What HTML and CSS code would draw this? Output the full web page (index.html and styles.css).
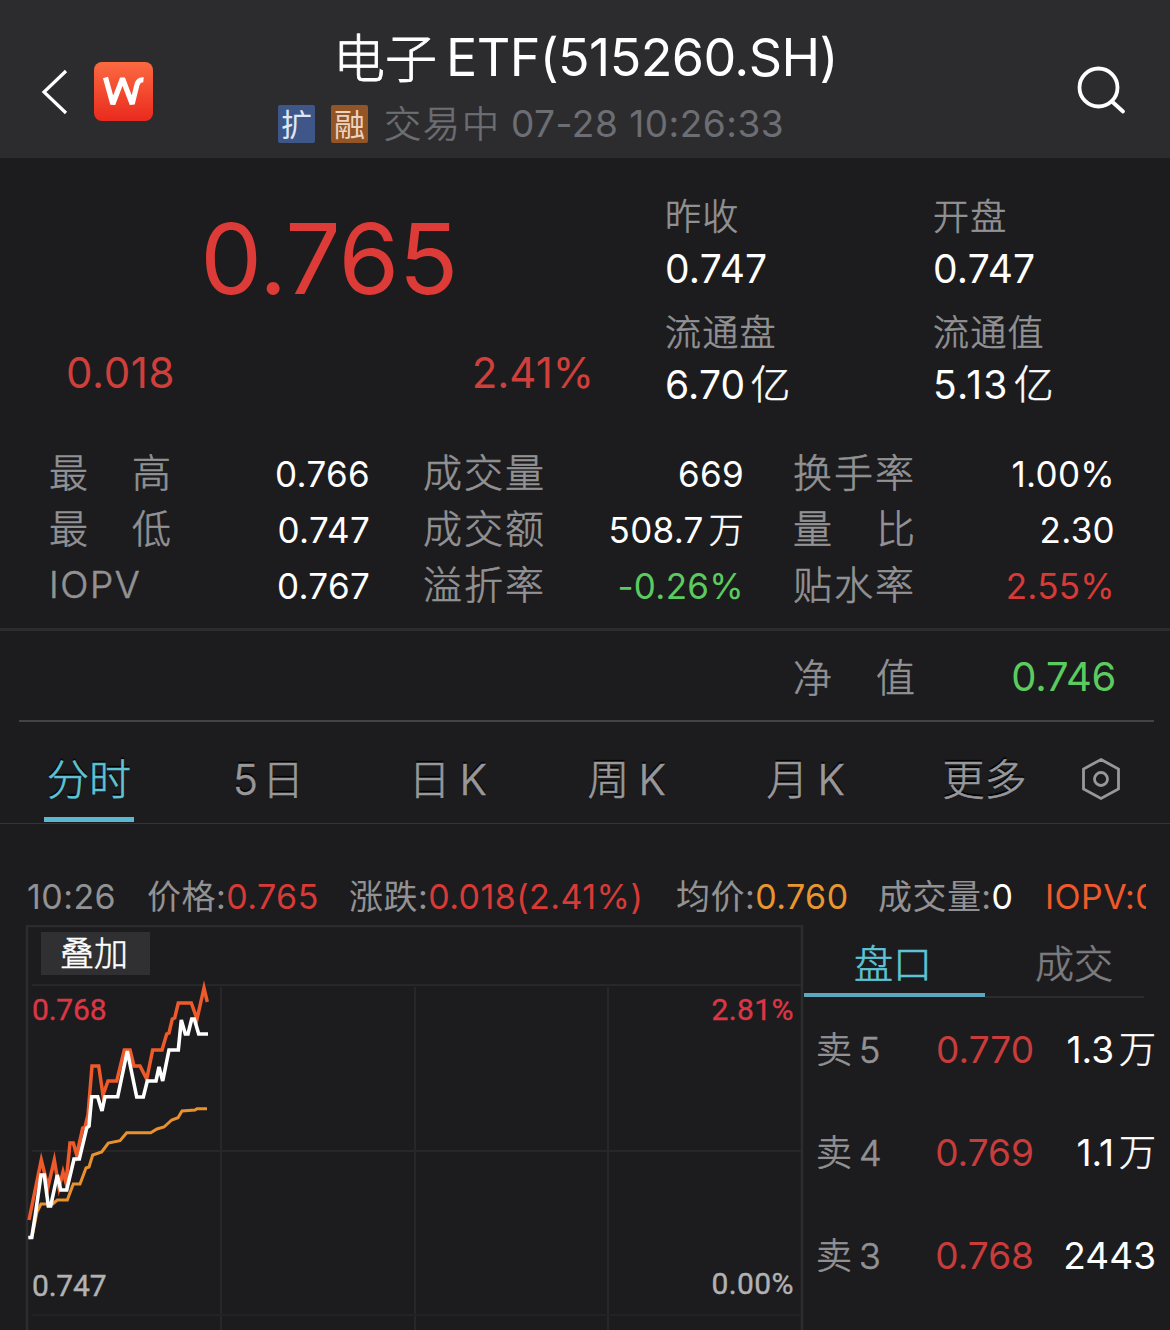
FILE: index.html
```html
<!DOCTYPE html>
<html lang="zh-CN">
<head>
<meta charset="utf-8">
<title>电子ETF(515260.SH)</title>
<link rel="stylesheet" href="styles.css">
</head>
<body>
<header class="topbar">
  <div class="topbar-left">
    <svg class="back" width="30" height="50" viewBox="0 0 30 50"><path d="M26 4 4 25 26 46" fill="none" stroke="#fff" stroke-width="3.2"/></svg>
    <svg class="logo" width="60" height="60" viewBox="0 0 60 60">
      <defs><linearGradient id="lg" x1="0" y1="0" x2="0" y2="1"><stop offset="0" stop-color="#fb6a41"/><stop offset="1" stop-color="#ea2a1e"/></linearGradient></defs>
      <rect x="0" y="0" width="59" height="59" rx="8" fill="url(#lg)"/>
      <path d="M11.500 15.500 18.800 42 28.500 16.500 38.200 42 43 22.500Q44.500 17.300 49.500 17.800" fill="none" stroke="#fff" stroke-width="5.200" stroke-linejoin="bevel"/>
    </svg>
  </div>
  <div class="heading">
    <h1 class="name"><span class="name-cjk">电子</span><span class="name-code">ETF(515260.SH)</span></h1>
    <div class="status">
      <span class="badge badge-blue">扩</span>
      <span class="badge badge-orange">融</span>
      <span class="status-text">交易中</span>
      <span class="status-time">07-28 10:26:33</span>
    </div>
  </div>
  <svg class="search" width="54" height="54" viewBox="0 0 54 54"><g fill="none" stroke="#fff" stroke-width="3.800"><circle cx="25.500" cy="25.500" r="19"/><path d="M39 39.500 50 49.500" stroke-linecap="round"/></g></svg>
</header>

<section class="quote">
  <div class="quote-main">
    <div class="price">0.765</div>
    <div class="changes"><span>0.018</span><span class="change-pct">2.41%</span></div>
  </div>
  <dl class="facts">
    <div class="fact"><dt>昨收</dt><dd>0.747</dd></div>
    <div class="fact"><dt>开盘</dt><dd>0.747</dd></div>
    <div class="fact"><dt>流通盘</dt><dd>6.70<span class="unit">亿</span></dd></div>
    <div class="fact"><dt>流通值</dt><dd class="loose">5.13<span class="unit">亿</span></dd></div>
  </dl>
</section>

<section class="stats">
  <div class="stat"><span class="label spread"><i>最</i><i>高</i></span><span class="value">0.766</span></div>
  <div class="stat"><span class="label">成交量</span><span class="value">669</span></div>
  <div class="stat"><span class="label">换手率</span><span class="value">1.00%</span></div>
  <div class="stat"><span class="label spread"><i>最</i><i>低</i></span><span class="value">0.747</span></div>
  <div class="stat"><span class="label">成交额</span><span class="value">508.7<span class="unit">万</span></span></div>
  <div class="stat"><span class="label spread"><i>量</i><i>比</i></span><span class="value">2.30</span></div>
  <div class="stat"><span class="label latin">IOPV</span><span class="value">0.767</span></div>
  <div class="stat"><span class="label">溢折率</span><span class="value down">-0.26%</span></div>
  <div class="stat"><span class="label">贴水率</span><span class="value up">2.55%</span></div>
</section>

<section class="nav-row">
  <div class="stat nav-stat"><span class="label spread"><i>净</i><i>值</i></span><span class="value down">0.746</span></div>
</section>

<nav class="tabs">
  <a class="tab active">分时</a>
  <a class="tab">5<span class="tab-cjk">日</span></a>
  <a class="tab">日<span class="tab-k">K</span></a>
  <a class="tab">周<span class="tab-k">K</span></a>
  <a class="tab">月<span class="tab-k">K</span></a>
  <a class="tab">更多</a>
  <svg class="settings" width="42" height="44" viewBox="0 0 42 44"><g fill="none" stroke="#98989b" stroke-width="2.800"><path d="M21 2.500 38.500 12V32L21 41.500 3.500 32V12Z"/><circle cx="21" cy="22" r="6.500"/></g></svg>
</nav>

<div class="ticker">
  <span>10:26</span>
  <span>价格:<b class="up">0.765</b></span>
  <span>涨跌:<b class="up">0.018(2.41%)</b></span>
  <span>均价:<b class="avg">0.760</b></span>
  <span>成交量:<b class="plain">0</b></span>
  <span class="iopv">IOPV:0</span>
</div>

<main class="board">
  <div class="chart">
    <svg class="plot" width="804" height="405" viewBox="0 925 804 405">
      <g fill="none" stroke="#2c2c2e" stroke-width="2">
        <path d="M27 1330V926H802V1330" stroke-width="2.500"/>
        <path d="M32 985H801M32 1151H801M221 987V1330M415 987V1330M608 987V1330" stroke="#272729"/>
        <path d="M32 1315H801" stroke="#222224"/>
      </g>
      <g fill="none" stroke-width="3" stroke-linejoin="miter">
        <polyline stroke="#e8912d" points="29,1238 32,1237 37,1212 41,1204 52.700,1204 57.300,1200 67.300,1200 73.300,1184 80,1184 86,1168 89,1167 92.700,1155 101.700,1152 108.300,1143 120,1140.700 126.700,1132.700 150.700,1132.700 157,1129 164,1127 171.700,1120 178,1117.700 182,1111 195,1110 197,1108.700 207,1108.700"/>
        <polyline stroke="#ef5a2b" stroke-width="3.500" stroke-miterlimit="10" points="29,1220 41.300,1160 48,1187 54.300,1160 59,1188 63,1172 66,1183 70,1143 73.300,1143 76.700,1155 82.700,1128 85,1127 88,1115 92,1066 98.700,1066 103,1095 108,1081 116.700,1081 124.300,1050 130,1050 134,1066 140,1066 146.700,1079 152.700,1050 162,1050 166.700,1034 169,1033 172.300,1019 174.700,1018 178.300,1003 191.300,1003 197,1019 204,988 207.300,1002"/>
        <polyline stroke="#fff" stroke-width="3.600" points="28.300,1237.500 31.700,1237.500 35,1217 41,1175 44.300,1175 48.300,1206 50.700,1206 57.300,1175 60.700,1190 66.700,1190 74,1159 79.300,1159 86.700,1128 89,1126 91.700,1096.700 97.700,1096.700 102,1111 105,1096.700 117.700,1096.700 127.300,1051 136.700,1097 143.300,1097 147.300,1081 156,1081 159,1067 162.700,1081 169,1050 178.300,1050 181.300,1020 185.300,1034 188,1034 191.700,1019 194.300,1019 198.700,1034 208,1034"/>
      </g>
      <g class="axis">
        <text x="32" y="1020" class="axis-up">0.768</text>
        <text x="794" y="1020" class="axis-up axis-end">2.81%</text>
        <text x="32" y="1296">0.747</text>
        <text x="794" y="1293.500" class="axis-end">0.00%</text>
      </g>
    </svg>
    <button class="overlay-btn">叠加</button>
  </div>
  <aside class="book">
    <div class="book-tabs"><span class="book-tab active">盘口</span><span class="book-tab">成交</span></div>
    <div class="order"><span class="side">卖<i>5</i></span><span class="bid">0.770</span><span class="vol">1.3<span class="unit">万</span></span></div>
    <div class="order"><span class="side">卖<i>4</i></span><span class="bid">0.769</span><span class="vol">1.1<span class="unit">万</span></span></div>
    <div class="order"><span class="side">卖<i>3</i></span><span class="bid">0.768</span><span class="vol">2443</span></div>
  </aside>
</main>
</body>
</html>
```
FILE: styles.css
```css
* { box-sizing: border-box; margin: 0; padding: 0; }
i { font-style: normal; }
b { font-weight: 400; }
body {
  width: 1170px;
  height: 1330px;
  overflow: hidden;
  background: #1c1c1e;
  color: #fff;
  font-family: Inter, "Noto Sans CJK SC", sans-serif;
  font-weight: 400;
  white-space: nowrap;
}
.up { color: #d83a37; }
.down { color: #5bcb5f; }
.unit { margin-left: 5px; font-weight: 300; -webkit-text-stroke: 0.5px; }
.loose { letter-spacing: 1.400px; }

.topbar {
  display: grid;
  grid-template-columns: 278px 1fr 120px;
  height: 158px;
  background: #2c2c2e;
}
.topbar-left { display: flex; align-items: center; gap: 24px; height: 60px; margin: 62px 0 0 40px; }
.heading { padding-top: 22px; }
.name { display: flex; margin-left: 55px; height: 70px; font-size: 52px; font-weight: 400; line-height: 71px; }
.name-cjk { padding-top: 2px; font-weight: 300; -webkit-text-stroke: 0.8px; }
.name-code { margin-left: 9px; letter-spacing: -0.600px; }
.status { display: flex; align-items: center; height: 64px; color: #6c6e73; font-size: 37px; line-height: 66px; }
.badge { width: 37px; height: 38px; margin-right: 16px; border-radius: 2px; font-size: 31px; line-height: 39px; text-align: center; }
.badge-blue { background: #3e5788; color: #dfe6f5; }
.badge-orange { background: #935526; color: #ecd3bf; }
.status-text { padding-top: 2px; letter-spacing: 2px; font-weight: 300; -webkit-text-stroke: 0.6px; }
.status-time { margin-left: 10px; letter-spacing: 0.500px; }
.search { margin: 62px 0 0 23px; }

.quote { display: grid; grid-template-columns: 666px 1fr; height: 286px; }
.price { height: 204px; padding-right: 8px; color: #dc3b37; font-size: 98px; line-height: 202px; text-align: center; letter-spacing: -0.600px; }
.changes { display: flex; justify-content: space-between; padding: 0 72px 0 66px; color: #cf3f3b; font-size: 42px; line-height: 21px; }
.changes span:first-child { letter-spacing: 0.600px; }
.facts { display: grid; grid-template-columns: 268px 1fr; grid-auto-rows: 116px; padding-top: 31px; margin-left: -1px; }
.fact dt { height: 54px; color: #929294; font-size: 36px; font-weight: 300; line-height: 56px; letter-spacing: 1.300px; -webkit-text-stroke: 0.6px; }
.fact dd { font-size: 39px; line-height: 51px; letter-spacing: 0.200px; }
.fact dd.loose { letter-spacing: 1.300px; }
.fact .unit { font-size: 40px; }

.stats { display: grid; grid-template-columns: 373px 371px 322px; grid-auto-rows: 56px; height: 187px; padding: 3px 0 0 49px; border-bottom: 3px solid #2c2c2e; }
.stat { display: flex; justify-content: space-between; line-height: 55px; }
.stat:nth-child(3n+1) { padding-right: 52px; }
.stat:nth-child(3n+2) { padding: 0 49px 0 1px; }
.label { height: 50px; color: #929294; font-size: 39px; font-weight: 300; line-height: 51px; letter-spacing: 2px; -webkit-text-stroke: 0.6px; }
.label.latin { font-size: 37px; letter-spacing: 1.600px; }
.spread { display: flex; justify-content: space-between; width: 122px; }
.spread i { letter-spacing: 0; }
.value { font-size: 35px; letter-spacing: 0.300px; }

.nav-row { display: flex; justify-content: flex-end; height: 91px; margin: 0 16px 0 19px; padding-right: 38px; border-bottom: 2px solid #434345; }
.stat.nav-stat { width: 323px; padding: 0; line-height: 92px; }
.nav-stat .label { line-height: 94px; }
.nav-stat .value { font-size: 40px; letter-spacing: -0.300px; }

.tabs { display: grid; grid-template-columns: repeat(6, 179px) 54px; height: 102px; border-bottom: 1px solid #343436; }
.tab { display: flex; justify-content: center; align-items: center; justify-self: center; width: 90px; height: 100px; color: #98989b; font-size: 42px; font-weight: 300; line-height: 100px; padding-top: 16px; text-shadow: 0 -2px 1px #000; -webkit-text-stroke: 0.6px; }
.tab.active { margin-left: -1px; border-bottom: 5px solid #5bb8cf; color: #5fc3d4; padding-top: 21px; }
.tab-cjk { margin-left: 4px; }
.tab-k { margin-left: 9px; }
.settings { margin: 35px 0 0 6px; }

.ticker { display: grid; grid-template-columns: 120px 202px 327px 202px 167px 101px; height: 101px; padding: 47px 0 0 27px; color: #929294; font-size: 34px; line-height: 51px; letter-spacing: 0.450px; }
.ticker .avg { color: #e8962f; }
.ticker .plain { color: #fff; }
.iopv { overflow: hidden; color: #ef5a2b; }

.board { display: grid; grid-template-columns: 804px 1fr; height: 405px; }
.chart { position: relative; }
.plot { display: block; }
.axis { fill: #b2b2b4; font: 400 30px Roboto, sans-serif; stroke: #b2b2b4; stroke-width: 0.4px; letter-spacing: -0.200px; }
.axis-up { fill: #dc3645; stroke: #dc3645; }
.axis-end { text-anchor: end; letter-spacing: 0.400px; }
.overlay-btn { position: absolute; left: 41px; top: 7px; width: 109px; height: 43px; padding-right: 3px; border: 0; background: #303033; color: #fff; font: 300 34px/43px Inter, "Noto Sans CJK SC", sans-serif; -webkit-text-stroke: 0.5px; }
.book-tabs { display: grid; grid-template-columns: 181px 159px; height: 73px; }
.book-tab { height: 73px; border-bottom: 2px solid #2c2c2e; color: #7d7d80; font-size: 39px; font-weight: 300; line-height: 77px; text-align: center; -webkit-text-stroke: 0.6px; }
.book-tab:last-child { padding-left: 19px; }
.book-tab.active { height: 72px; padding-right: 3px; border-bottom: 4px solid #5ba9bf; color: #5fc3d4; }
.order { display: grid; grid-template-columns: 88px 130px 122px; height: 103px; padding-left: 12px; font-size: 37px; line-height: 104px; }
.side { color: #929294; font-size: 36px; font-weight: 300; -webkit-text-stroke: 0.6px; }
.side i { margin-left: 7px; }
.bid { color: #c93c3c; text-align: right; }
.vol { text-align: right; }
```
